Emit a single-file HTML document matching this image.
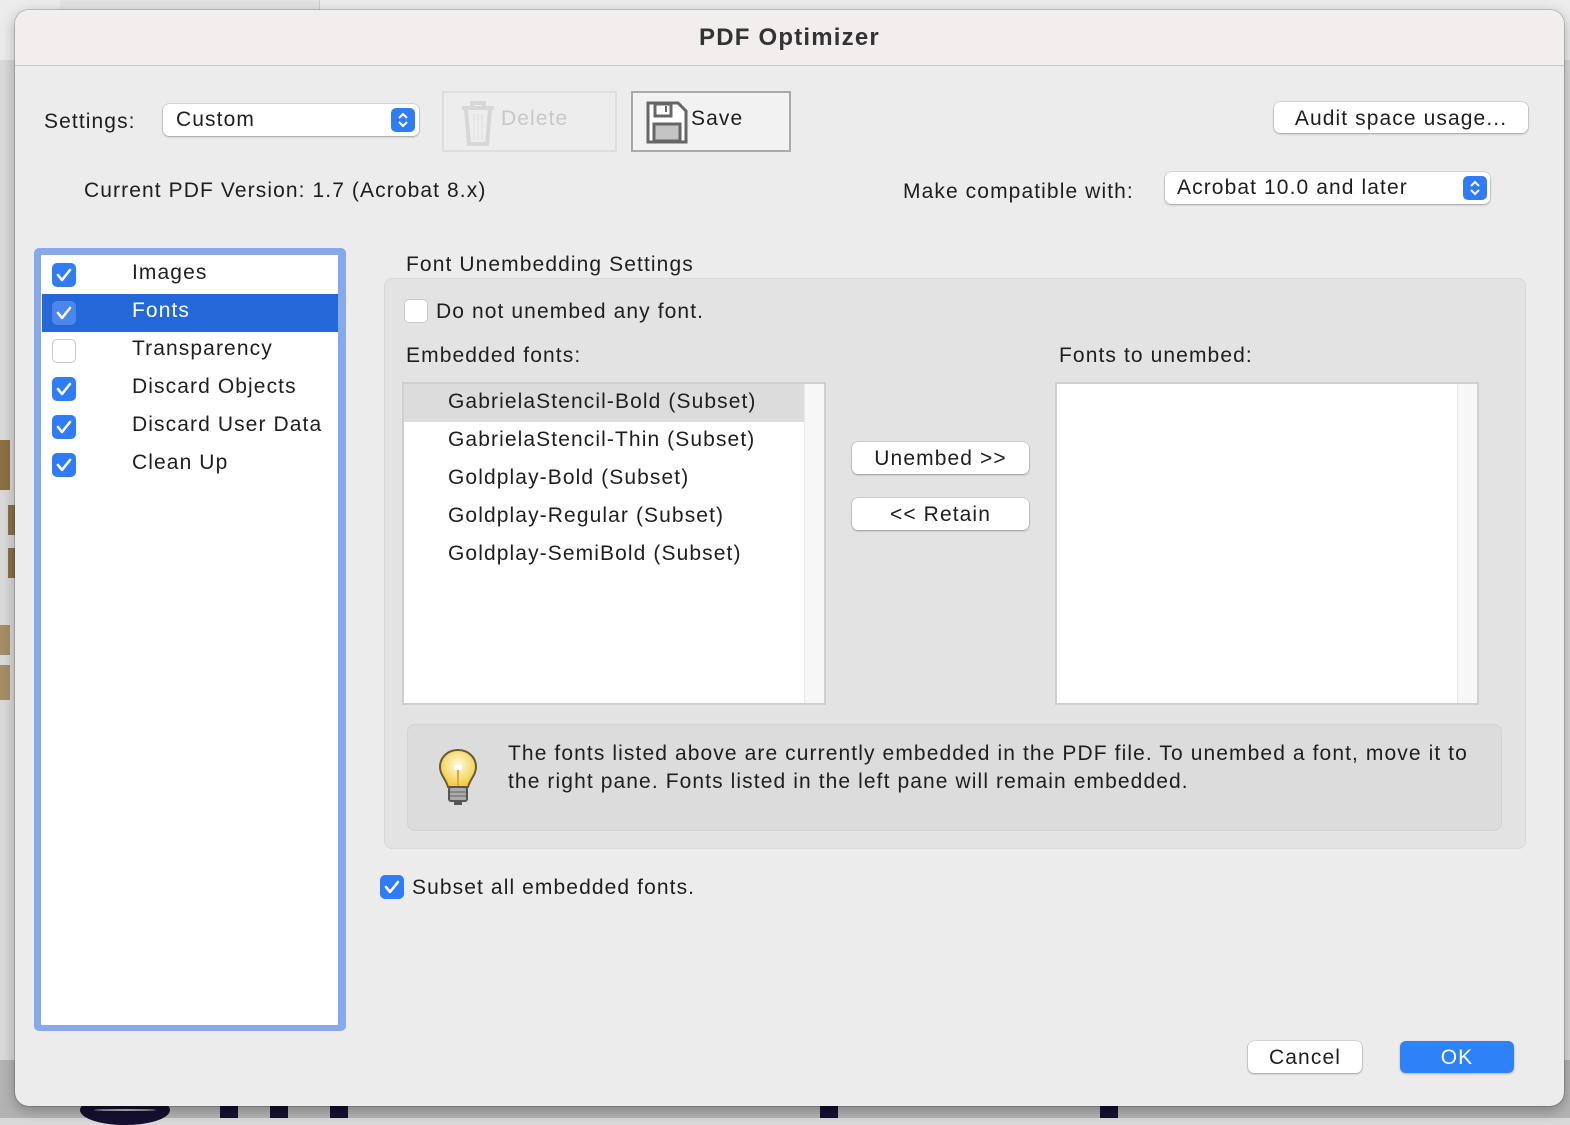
<!DOCTYPE html>
<html><head><meta charset="utf-8"><style>
*{box-sizing:border-box;margin:0;padding:0}
body{width:1570px;height:1118px;overflow:hidden;background:#d9d9d9;font-family:"Liberation Sans",sans-serif;color:#1e1e1e;position:relative;letter-spacing:1.1px}
.a{position:absolute}
.t{font-size:21px;white-space:nowrap}
.btn{position:absolute;background:#fff;border-radius:6px;box-shadow:0 0 0 0.5px rgba(0,0,0,.18),0 1px 2px rgba(0,0,0,.25);font-size:21px;text-align:center;white-space:nowrap}
.cb{position:absolute;width:24px;height:24px;border-radius:5px;background:#2f7cf6}
.cb svg{position:absolute;left:3px;top:3px}
.cbe{position:absolute;width:24px;height:24px;border-radius:5px;background:#fff;border:1px solid #c8c8c8}
.step{position:absolute;width:24px;height:24px;border-radius:5px;background:#2f7cf6}
</style></head><body>
<div class="a" style="left:0;top:0;width:1570px;height:60px;background:#ececec"></div>
<div class="a" style="left:60px;top:0;width:260px;height:14px;background:#e3e3e3;border-right:1px solid #ccc"></div>
<div class="a" style="left:0;top:1060px;width:1570px;height:58px;background:#b3b3b3"></div>
<div class="a" style="left:0;top:440px;width:10px;height:50px;background:#8b7045"></div>
<div class="a" style="left:8px;top:505px;width:8px;height:30px;background:#8b7045"></div>
<div class="a" style="left:8px;top:548px;width:8px;height:30px;background:#8b7045"></div>
<div class="a" style="left:0;top:625px;width:10px;height:30px;background:#a58f66"></div>
<div class="a" style="left:0;top:665px;width:10px;height:35px;background:#a58f66"></div>
<div class="a" style="left:80px;top:1095px;width:90px;height:30px;border:14px solid #151030;border-radius:50%"></div>
<div class="a" style="left:220px;top:1098px;width:18px;height:20px;background:#151030"></div>
<div class="a" style="left:270px;top:1098px;width:18px;height:20px;background:#151030"></div>
<div class="a" style="left:330px;top:1098px;width:18px;height:20px;background:#151030"></div>
<div class="a" style="left:820px;top:1098px;width:18px;height:20px;background:#151030"></div>
<div class="a" style="left:1100px;top:1098px;width:18px;height:20px;background:#151030"></div>
<div class="a" style="left:15px;top:10px;width:1549px;height:1096px;background:#ececec;border-radius:14px;box-shadow:0 0 0 1px rgba(0,0,0,.15),0 4px 14px rgba(0,0,0,.3);overflow:hidden">
 <div class="a" style="left:0;top:0;width:100%;height:56px;background:#f3eeee;border-bottom:1px solid #c9c9c9"></div>
 <div class="a" style="left:0;top:14px;width:100%;text-align:center;font-size:24px;font-weight:bold;color:#333;letter-spacing:1.2px">PDF Optimizer</div>
</div>
<div class="a t" style="left:44px;top:110px">Settings:</div>
<div class="btn" style="left:163px;top:104px;width:256px;height:32px;text-align:left;padding:4px 0 0 13px">Custom</div>
<div class="step" style="left:391px;top:108px"><svg width="24" height="24"><path d="M8 10l4-4 4 4M8 14l4 4 4-4" stroke="#fff" stroke-width="2" fill="none"/></svg></div>
<div class="a" style="left:442px;top:91px;width:175px;height:61px;border:2px solid #dedede;background:#ededed"></div>
<svg class="a" style="left:458px;top:100px" width="40" height="46"><path d="M4 8h32M14 8V3h12v5M8 10l3 34h18l3-34" stroke="#d7d7d7" stroke-width="4" fill="none"/><path d="M16 14v26M20 14v26M24 14v26" stroke="#ddd" stroke-width="1"/></svg>
<div class="a t" style="left:501px;top:107px;color:#c8c8c8">Delete</div>
<div class="a" style="left:631px;top:91px;width:160px;height:61px;border:2px solid #a9a9a9;background:#f2f2f2"></div>
<svg class="a" style="left:646px;top:101px" width="42" height="43"><path d="M2 2h30l8 8v31H2z" fill="#fff" stroke="#666" stroke-width="3"/><rect x="9" y="3" width="16" height="12" fill="none" stroke="#666" stroke-width="3"/><rect x="19" y="5" width="2" height="6" fill="#666"/><rect x="8" y="23" width="26" height="17" fill="#c4c4c4" stroke="#666" stroke-width="3"/></svg>
<div class="a t" style="left:691px;top:107px">Save</div>
<div class="btn" style="left:1274px;top:102px;width:254px;height:31px;padding-top:5px">Audit space usage...</div>
<div class="a t" style="left:84px;top:179px">Current PDF Version: 1.7 (Acrobat 8.x)</div>
<div class="a t" style="left:903px;top:180px">Make compatible with:</div>
<div class="btn" style="left:1165px;top:172px;width:325px;height:32px;text-align:left;padding:4px 0 0 12px">Acrobat 10.0 and later</div>
<div class="step" style="left:1463px;top:176px"><svg width="24" height="24"><path d="M8 10l4-4 4 4M8 14l4 4 4-4" stroke="#fff" stroke-width="2" fill="none"/></svg></div>
<div class="a" style="left:34px;top:248px;width:312px;height:783px;border-radius:5px;background:#86a9ec"></div>
<div class="a" style="left:41px;top:255px;width:297px;height:770px;background:#fff"></div>
<div class="a" style="left:42px;top:294px;width:296px;height:38px;background:#2468d8"></div>
<div class="cb" style="left:52px;top:263px"><svg width="18" height="18"><path d="M3 9l4 5 8-10" stroke="#fff" stroke-width="2.6" fill="none" stroke-linecap="round" stroke-linejoin="round"/></svg></div>
<div class="cb" style="left:52px;top:301px;background:#4a87ec"><svg width="18" height="18"><path d="M3 9l4 5 8-10" stroke="#fff" stroke-width="2.6" fill="none" stroke-linecap="round" stroke-linejoin="round"/></svg></div>
<div class="cbe" style="left:52px;top:339px"></div>
<div class="cb" style="left:52px;top:377px"><svg width="18" height="18"><path d="M3 9l4 5 8-10" stroke="#fff" stroke-width="2.6" fill="none" stroke-linecap="round" stroke-linejoin="round"/></svg></div>
<div class="cb" style="left:52px;top:415px"><svg width="18" height="18"><path d="M3 9l4 5 8-10" stroke="#fff" stroke-width="2.6" fill="none" stroke-linecap="round" stroke-linejoin="round"/></svg></div>
<div class="cb" style="left:52px;top:453px"><svg width="18" height="18"><path d="M3 9l4 5 8-10" stroke="#fff" stroke-width="2.6" fill="none" stroke-linecap="round" stroke-linejoin="round"/></svg></div>
<div class="a t" style="left:132px;top:261px">Images</div>
<div class="a t" style="left:132px;top:299px;color:#fff">Fonts</div>
<div class="a t" style="left:132px;top:337px">Transparency</div>
<div class="a t" style="left:132px;top:375px">Discard Objects</div>
<div class="a t" style="left:132px;top:413px">Discard User Data</div>
<div class="a t" style="left:132px;top:451px">Clean Up</div>
<div class="a t" style="left:406px;top:253px">Font Unembedding Settings</div>
<div class="a" style="left:384px;top:278px;width:1142px;height:571px;background:#e3e3e3;border:1px solid #d8d8d8;border-radius:8px"></div>
<div class="cbe" style="left:404px;top:299px"></div>
<div class="a t" style="left:436px;top:300px">Do not unembed any font.</div>
<div class="a t" style="left:406px;top:344px">Embedded fonts:</div>
<div class="a t" style="left:1059px;top:344px">Fonts to unembed:</div>
<div class="a" style="left:402px;top:382px;width:424px;height:323px;background:#fff;border:2px solid #cfcfcf"></div>
<div class="a" style="left:804px;top:384px;width:20px;height:319px;background:#f7f7f7;border-left:1px solid #e6e6e6"></div>
<div class="a" style="left:404px;top:384px;width:400px;height:38px;background:#dcdcdc"></div>
<div class="a t" style="left:448px;top:390px">GabrielaStencil-Bold (Subset)</div>
<div class="a t" style="left:448px;top:428px">GabrielaStencil-Thin (Subset)</div>
<div class="a t" style="left:448px;top:466px">Goldplay-Bold (Subset)</div>
<div class="a t" style="left:448px;top:504px">Goldplay-Regular (Subset)</div>
<div class="a t" style="left:448px;top:542px">Goldplay-SemiBold (Subset)</div>
<div class="a" style="left:1055px;top:382px;width:424px;height:323px;background:#fff;border:2px solid #cfcfcf"></div>
<div class="a" style="left:1457px;top:384px;width:20px;height:319px;background:#f7f7f7;border-left:1px solid #e6e6e6"></div>
<div class="btn" style="left:852px;top:442px;width:177px;height:32px;padding-top:5px">Unembed &gt;&gt;</div>
<div class="btn" style="left:852px;top:498px;width:177px;height:32px;padding-top:5px">&lt;&lt; Retain</div>
<div class="a" style="left:407px;top:724px;width:1095px;height:107px;background:#dcdcdc;border:1px solid #d3d3d3;border-radius:8px"></div>
<svg class="a" style="left:436px;top:748px" width="44" height="60"><defs><radialGradient id="g" cx="0.5" cy="0.4" r="0.6"><stop offset="0" stop-color="#fffbe0"/><stop offset="1" stop-color="#f2c93a"/></radialGradient></defs><path d="M22 2C11 2 4 10 4 19c0 8 6 12 8 20h20c2-8 8-12 8-20C40 10 33 2 22 2z" fill="url(#g)" stroke="#6a5a3a" stroke-width="2"/><rect x="18" y="17" width="8" height="5" fill="#fff"/><path d="M22 22v17" stroke="#e0a93a" stroke-width="2"/><rect x="13" y="39" width="18" height="14" rx="2" fill="#aaa" stroke="#555" stroke-width="2"/><path d="M14 44h16M14 48h16" stroke="#666"/><rect x="18" y="53" width="8" height="4" fill="#555"/></svg>
<div class="a t" style="left:508px;top:740px;line-height:28px">The fonts listed above are currently embedded in the PDF file. To unembed a font, move it to<br>the right pane. Fonts listed in the left pane will remain embedded.</div>
<div class="cb" style="left:380px;top:875px"><svg width="18" height="18"><path d="M3 9l4 5 8-10" stroke="#fff" stroke-width="2.6" fill="none" stroke-linecap="round" stroke-linejoin="round"/></svg></div>
<div class="a t" style="left:412px;top:876px">Subset all embedded fonts.</div>
<div class="btn" style="left:1248px;top:1041px;width:114px;height:32px;padding-top:5px">Cancel</div>
<div class="btn" style="left:1400px;top:1041px;width:114px;height:32px;padding-top:5px;background:#2f81f7;color:#fff;box-shadow:0 1px 2px rgba(0,0,0,.25)">OK</div>
</body></html>
